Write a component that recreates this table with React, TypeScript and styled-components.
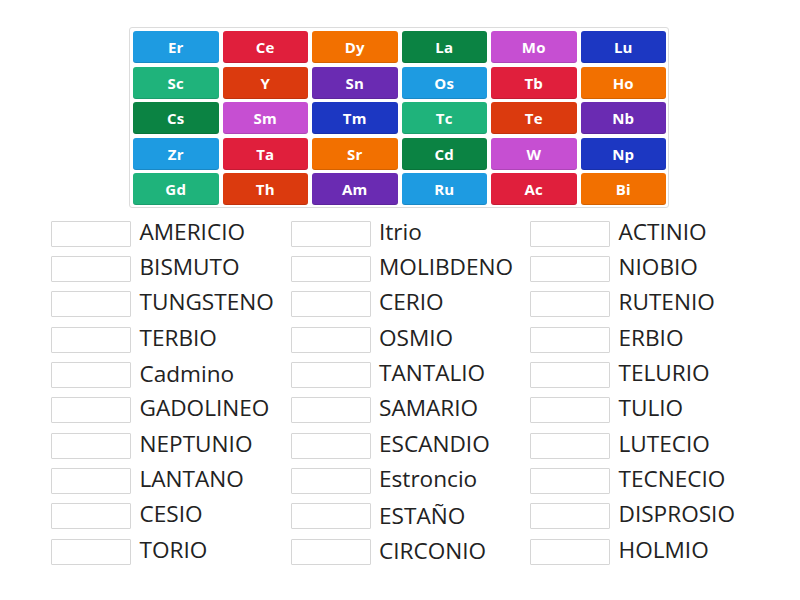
import React from "react";
import styled, { createGlobalStyle } from "styled-components";

const Global = createGlobalStyle`
  html, body { margin: 0; padding: 0; background: #ffffff; }
  body { font-family: "Open Sans", "Liberation Sans", sans-serif; width: 800px; height: 600px; overflow: hidden; }
`;

const Page = styled.div`
  width: 800px;
  height: 600px;
  padding-top: 27px;
  box-sizing: border-box;
`;

const Panel = styled.div`
  margin-left: 129px;
  width: 540px;
  box-sizing: border-box;
  border: 1px solid #dcdcdc;
  border-radius: 3px;
  padding: 3px 2px 2px 3px;
  display: grid;
  grid-template-columns: repeat(6, 1fr);
  grid-auto-rows: 32px;
  column-gap: 4px;
  row-gap: 3.5px;
  background: #fff;
`;

const Tile = styled.div<{ $bg: string }>`
  background: ${(p) => p.$bg};
  border-radius: 3px;
  box-shadow: inset 0 -1px 0 rgba(0, 0, 0, 0.12);
  color: #ffffff;
  font-weight: 700;
  font-size: 15px;
  display: flex;
  align-items: center;
  justify-content: center;
  letter-spacing: 0.2px;
`;

const List = styled.div`
  margin-top: 12.7px;
  margin-left: 51px;
  display: grid;
  grid-template-columns: repeat(3, 239.5px);
  grid-template-rows: repeat(10, 35.35px);
  grid-auto-flow: column;
`;

const Row = styled.div`
  display: flex;
  align-items: flex-start;
`;

const Slot = styled.div`
  width: 80px;
  height: 26px;
  box-sizing: border-box;
  border: 1px solid #d6d6d6;
  border-radius: 1px;
  background: #fff;
  flex: none;
`;

const Label = styled.div<{ $dy?: number }>`
  margin-left: 8.5px;
  margin-top: ${(p) => -2 + (p.$dy || 0)}px;
  font-size: 22.6px;
  line-height: 26px;
  color: #222222;
  white-space: nowrap;
`;

const COLORS = [
  "#1e9be1",
  "#e01f3c",
  "#f27000",
  "#0b8343",
  "#c64fd2",
  "#1c37c2",
  "#1fb37b",
  "#db3a0e",
  "#6a2bb2",
];

const SYMBOLS = [
  "Er", "Ce", "Dy", "La", "Mo", "Lu",
  "Sc", "Y", "Sn", "Os", "Tb", "Ho",
  "Cs", "Sm", "Tm", "Tc", "Te", "Nb",
  "Zr", "Ta", "Sr", "Cd", "W", "Np",
  "Gd", "Th", "Am", "Ru", "Ac", "Bi",
];

const NAMES: { t: string; dy?: number }[] = [
  { t: "AMERICIO" }, { t: "BISMUTO" }, { t: "TUNGSTENO" }, { t: "TERBIO" }, { t: "Cadmino", dy: 1 },
  { t: "GADOLINEO" }, { t: "NEPTUNIO" }, { t: "LANTANO" }, { t: "CESIO" }, { t: "TORIO" },
  { t: "Itrio" }, { t: "MOLIBDENO" }, { t: "CERIO" }, { t: "OSMIO" }, { t: "TANTALIO" },
  { t: "SAMARIO" }, { t: "ESCANDIO" }, { t: "Estroncio" }, { t: "ESTAÑO", dy: 2 }, { t: "CIRCONIO", dy: 1 },
  { t: "ACTINIO" }, { t: "NIOBIO" }, { t: "RUTENIO" }, { t: "ERBIO" }, { t: "TELURIO" },
  { t: "TULIO" }, { t: "LUTECIO" }, { t: "TECNECIO" }, { t: "DISPROSIO" }, { t: "HOLMIO" },
];

export default function App() {
  return (
    <Page>
      <Global />
      <Panel>
        {SYMBOLS.map((s, i) => (
          <Tile key={s} $bg={COLORS[i % COLORS.length]}>
            {s}
          </Tile>
        ))}
      </Panel>
      <List>
        {NAMES.map((n) => (
          <Row key={n.t}>
            <Slot />
            <Label $dy={n.dy}>{n.t}</Label>
          </Row>
        ))}
      </List>
    </Page>
  );
}
